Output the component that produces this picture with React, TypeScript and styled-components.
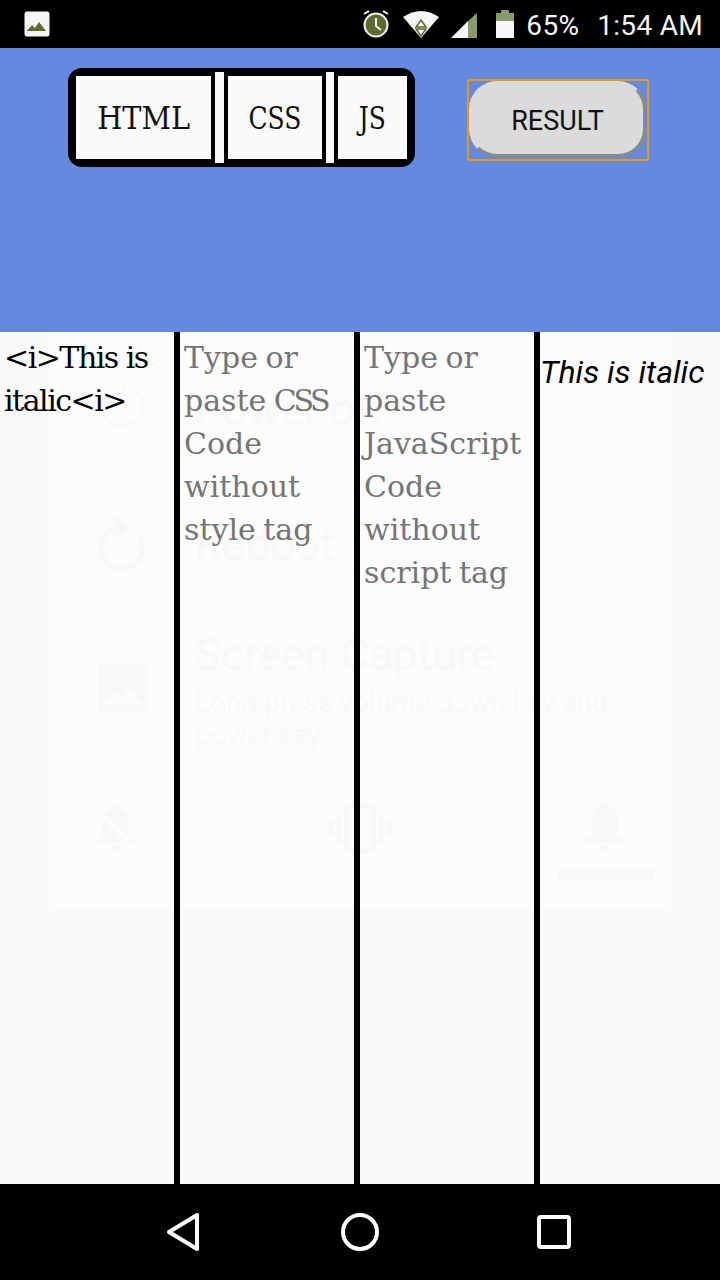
import * as React from 'react'
import styled, { createGlobalStyle } from 'styled-components'

const GlobalStyle = createGlobalStyle`
  html, body {
    margin: 0;
    padding: 0;
    background: #fafafa;
  }
  * {
    box-sizing: border-box;
  }
`

const Page = styled.div`
  display: flex;
  flex-direction: column;
  width: 720px;
  height: 1280px;
  overflow: hidden;
  background: #fafafa;
`

const StatusBar = styled.div`
  display: flex;
  align-items: center;
  height: 48px;
  padding: 0 17px 0 24px;
  background: #000;
  color: #f5f5f5;
  font-family: Roboto, sans-serif;
  font-size: 28px;
  letter-spacing: 0.3px;
  flex-shrink: 0;
`

const StatusIcons = styled.div`
  display: flex;
  align-items: center;
  margin-left: auto;
`

const StatusIcon = styled.svg<{ $left: number; $top?: number }>`
  margin-left: ${(p) => p.$left}px;
  margin-top: ${(p) => p.$top || 0}px;
`

const StatusText = styled.span<{ $left: number }>`
  margin-left: ${(p) => p.$left}px;
  padding-top: 3px;
  line-height: 48px;
`

const Header = styled.div`
  display: flex;
  align-items: flex-start;
  height: 284px;
  padding: 20px 0 0 68px;
  background: #6489de;
  flex-shrink: 0;
`

const TabGroup = styled.div`
  display: flex;
  align-items: center;
  gap: 4px;
  height: 99px;
  padding: 0 8px;
  background: #000;
  border-radius: 14px;
`

const Tab = styled.button<{ $width: number }>`
  width: ${(p) => p.$width}px;
  height: 83px;
  padding: 0;
  border: none;
  background: #fafafa;
  color: #111;
  font-family: 'DejaVu Serif', serif;
  font-size: 32px;
`

const TabLabel = styled.span<{ $squeeze: number }>`
  display: inline-block;
  transform: scaleX(${(p) => p.$squeeze});
`

const TabDivider = styled.div<{ $width: number }>`
  width: ${(p) => p.$width}px;
  height: 91px;
  background: #fafafa;
`

const ResultOutline = styled.div`
  width: 182px;
  height: 82px;
  margin: 11px 0 0 52px;
  border: 2px solid #e39a17;
  border-radius: 2px;
`

const ResultButton = styled.button`
  display: block;
  width: 177px;
  height: 76px;
  padding: 3px 0 0;
  border: 3px solid;
  border-color: #dbdbdb #8a8a8a #8a8a8a #dbdbdb;
  border-radius: 28px;
  background: #dbdbdb;
  color: #111;
  font-family: Roboto, sans-serif;
  font-size: 27px;
`

const Workspace = styled.div`
  position: relative;
  display: flex;
  flex: 1;
  min-height: 0;
`

const GhostDialog = styled.div`
  position: absolute;
  left: 50px;
  top: 0;
  width: 620px;
  height: 576px;
  border-radius: 0 0 6px 6px;
  background: #fcfcfc;
  color: #f8f8f8;
  font-family: Roboto, sans-serif;
`

const GhostLabel = styled.div<{ $x: number; $y: number; $size: number }>`
  position: absolute;
  left: ${(p) => p.$x}px;
  top: ${(p) => p.$y}px;
  font-size: ${(p) => p.$size}px;
  line-height: 1;
  white-space: nowrap;
`

const GhostIcon = styled.svg<{ $x: number; $y: number; $width?: number }>`
  position: absolute;
  left: ${(p) => p.$x}px;
  top: ${(p) => p.$y}px;
  width: ${(p) => p.$width || 50}px;
  height: 50px;
  overflow: visible;
`

const GhostSlider = styled.div`
  position: absolute;
  left: 508px;
  top: 537px;
  width: 96px;
  height: 12px;
  background: #f7f8f8;
`

const Column = styled.div<{ $width: number; $divided?: boolean }>`
  position: relative;
  width: ${(p) => p.$width}px;
  border-right: ${(p) => (p.$divided ? '6px solid #000' : 'none')};
  padding: 4px 0 0 4px;
`

const ColumnText = styled.div<{ $muted?: boolean; $tracking?: number }>`
  color: ${(p) => (p.$muted ? '#757575' : '#000')};
  font-family: 'DejaVu Serif', serif;
  font-size: 30px;
  line-height: 43px;
  letter-spacing: ${(p) => p.$tracking || 0}px;
  word-spacing: ${(p) => (p.$muted ? -2 : 0)}px;
`

const Caps = styled.span`
  letter-spacing: -3.4px;
`

const ResultText = styled.i`
  display: block;
  margin: 15px 0 0 -4px;
  color: #000;
  font-family: Roboto, sans-serif;
  font-size: 32px;
  line-height: 43px;
  white-space: nowrap;
`

const NavBar = styled.div`
  display: flex;
  align-items: center;
  height: 96px;
  padding-left: 166px;
  background: #000;
  flex-shrink: 0;
`

const NavIcon = styled.svg<{ $left?: number }>`
  margin-left: ${(p) => p.$left || 0}px;
`

const App = () => {
  return (
    <Page>
      <GlobalStyle />
      <StatusBar>
        <svg width="26" height="26" viewBox="0 0 26 26">
          <rect x="0.5" y="0.5" width="25" height="25" rx="2.5" fill="#f5f5f5" />
          <path d="M3 20l5-6 3 3 4-6 7 9z" fill="#5b6b2f" />
        </svg>
        <StatusIcons>
          <StatusIcon $left={0} width="28" height="30" viewBox="0 0 28 30">
            <circle cx="14" cy="16" r="11.5" fill="#5b6b2f" stroke="#f2f2f2" strokeWidth="2" />
            <path d="M14 9v8l5 4" fill="none" stroke="#f2f2f2" strokeWidth="2" />
            <path d="M2 5l5-3M26 5l-5-3" stroke="#f2f2f2" strokeWidth="2" />
          </StatusIcon>
          <StatusIcon $left={13} width="36" height="28" viewBox="0 0 36 28">
            <path d="M0 7Q18 -5 36 7L18 28z" fill="#f7f7f7" />
            <path d="M18 10l5 7H13zM13 19h10l-5 7z" fill="none" stroke="#5b6b2f" strokeWidth="1.5" />
          </StatusIcon>
          <StatusIcon $left={12} $top={3} width="26" height="25" viewBox="0 0 26 25">
            <path d="M0 25L17 8v17z" fill="#f7f7f7" />
            <path d="M17 8L26 0v25h-9z" fill="#8a9a6a" />
          </StatusIcon>
          <StatusIcon $left={19} width="18" height="28" viewBox="0 0 18 28">
            <path d="M5 0h8v3h5v8H0V3h5z" fill="#8a9a6a" />
            <path d="M0 11h18v17H0z" fill="#f7f7f7" />
          </StatusIcon>
          <StatusText $left={12}>65%</StatusText>
          <StatusText $left={18}>1:54 AM</StatusText>
        </StatusIcons>
      </StatusBar>

      <Header>
        <TabGroup>
          <Tab $width={135}>
            <TabLabel $squeeze={0.9}>HTML</TabLabel>
          </Tab>
          <TabDivider $width={9} />
          <Tab $width={94}>
            <TabLabel $squeeze={0.78}>CSS</TabLabel>
          </Tab>
          <TabDivider $width={8} />
          <Tab $width={69}>
            <TabLabel $squeeze={0.78}>JS</TabLabel>
          </Tab>
        </TabGroup>
        <ResultOutline>
          <ResultButton>RESULT</ResultButton>
        </ResultOutline>
      </Header>

      <Workspace>
        <GhostDialog>
          <GhostLabel $x={145} $y={56} $size={44}>Power off</GhostLabel>
          <GhostLabel $x={145} $y={191} $size={44}>Reboot</GhostLabel>
          <GhostLabel $x={145} $y={301} $size={44}>Screen Capture</GhostLabel>
          <GhostLabel $x={145} $y={357} $size={28}>Long press volume down key and</GhostLabel>
          <GhostLabel $x={145} $y={389} $size={28}>power key</GhostLabel>
          <GhostIcon $x={48} $y={48} viewBox="0 0 50 50">
            <path d="M25 3v20M13 10a20 20 0 1 0 24 0" fill="none" stroke="#f9f9f9" strokeWidth="4" />
          </GhostIcon>
          <GhostIcon $x={47} $y={188} viewBox="0 0 50 50">
            <path d="M25 7A21 21 0 1 0 42 16" fill="none" stroke="#f8f8f8" strokeWidth="5" />
            <path d="M19 -3l9 10-9 10" fill="none" stroke="#f8f8f8" strokeWidth="5" />
          </GhostIcon>
          <GhostIcon $x={48} $y={332} viewBox="0 0 50 50">
            <rect width="49" height="48" rx="4" fill="#f8f8f8" />
            <path d="M6 40l10-12 6 6 8-12 14 18z" fill="#fcfcfc" />
          </GhostIcon>
          <GhostIcon $x={40} $y={470} viewBox="0 0 50 50">
            <path d="M25 2c-2 0-3 2-3 4-7 2-10 7-10 14v14l-7 5v2h40v-2l-7-5V20c0-7-3-12-10-14 0-2-1-4-3-4zM20 44h10l-5 6z" fill="#f8f8f8" />
            <path d="M4 6l42 42" stroke="#fcfcfc" strokeWidth="5" />
            <path d="M1 4l3-3" stroke="#f8f8f8" strokeWidth="2" />
          </GhostIcon>
          <GhostIcon $x={277} $y={472} $width={66} viewBox="0 0 66 50">
            <rect x="19" y="2" width="28" height="45" rx="3" fill="none" stroke="#f8f8f8" strokeWidth="4" />
            <path d="M1 16h6v17H1zM9 11h6v27H9zM51 11h6v27h-6zM60 16h6v17h-6z" fill="#f8f8f8" />
          </GhostIcon>
          <GhostIcon $x={530} $y={470} viewBox="0 0 50 50">
            <path d="M25 0c-2 0-3 2-3 4-7 2-10 7-10 14v16l-9 5v2h44v-2l-9-5V18c0-7-3-12-10-14 0-2-1-4-3-4zM19 44h12l-6 8z" fill="#f8f8f8" />
          </GhostIcon>
          <GhostSlider />
        </GhostDialog>

        <Column $width={180} $divided>
          <ColumnText $tracking={-1.5}>{'<i>This is italic<i>'}</ColumnText>
        </Column>
        <Column $width={180} $divided>
          <ColumnText $muted>
            Type or paste <Caps>CSS</Caps> Code without style tag
          </ColumnText>
        </Column>
        <Column $width={180} $divided>
          <ColumnText $muted>Type or paste JavaScript Code without script tag</ColumnText>
        </Column>
        <Column $width={180}>
          <ResultText>This is italic</ResultText>
        </Column>
      </Workspace>

      <NavBar>
        <NavIcon width="36" height="40" viewBox="0 0 36 40">
          <path d="M31 3v34L3 20z" fill="none" stroke="#fff" strokeWidth="4" strokeLinejoin="round" />
        </NavIcon>
        <NavIcon $left={139} width="38" height="38" viewBox="0 0 38 38">
          <circle cx="19" cy="19" r="17" fill="none" stroke="#fff" strokeWidth="4" />
        </NavIcon>
        <NavIcon $left={158} width="34" height="34" viewBox="0 0 34 34">
          <rect x="2" y="2" width="30" height="30" rx="2" fill="none" stroke="#fff" strokeWidth="4" />
        </NavIcon>
      </NavBar>
    </Page>
  )
}

export default App
